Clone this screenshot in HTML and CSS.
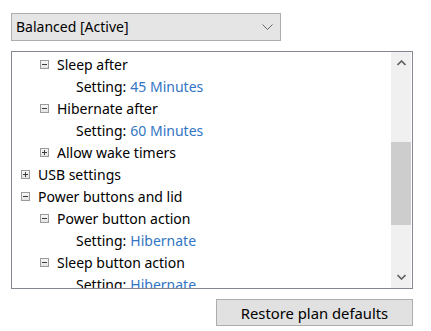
FILE: index.html
```html
<!DOCTYPE html>
<html>
<head>
<meta charset="utf-8">
<link rel="stylesheet" href="styles.css">
</head>
<body>
<div class="page">
  <div class="select">
    <span class="select-text">Balanced [Active]</span>
    <svg class="chev" width="11" height="7" viewBox="0 0 11 7"><path d="M0.5 0.5 L5.5 5.5 L10.5 0.5" fill="none" stroke="#666" stroke-width="1"/></svg>
  </div>
  <div class="listbox">
    <div class="tree">
      <div class="row l1"><span class="box minus"></span><span>Sleep after</span></div>
      <div class="row l2"><span>Setting:</span><span class="val">45 Minutes</span></div>
      <div class="row l1"><span class="box minus"></span><span>Hibernate after</span></div>
      <div class="row l2"><span>Setting:</span><span class="val">60 Minutes</span></div>
      <div class="row l1"><span class="box plus"></span><span>Allow wake timers</span></div>
      <div class="row l0"><span class="box plus"></span><span>USB settings</span></div>
      <div class="row l0"><span class="box minus"></span><span>Power buttons and lid</span></div>
      <div class="row l1"><span class="box minus"></span><span>Power button action</span></div>
      <div class="row l2"><span>Setting:</span><span class="val">Hibernate</span></div>
      <div class="row l1"><span class="box minus"></span><span>Sleep button action</span></div>
      <div class="row l2"><span>Setting:</span><span class="val">Hibernate</span></div>
    </div>
    <div class="scrollbar">
      <div class="arrow">
        <svg width="9" height="6" viewBox="0 0 9 6"><path d="M0.5 5 L4.5 1 L8.5 5" fill="none" stroke="#606060" stroke-width="1.6"/></svg>
      </div>
      <div class="track">
        <div class="thumb"></div>
      </div>
      <div class="arrow">
        <svg width="9" height="6" viewBox="0 0 9 6"><path d="M0.5 1 L4.5 5 L8.5 1" fill="none" stroke="#606060" stroke-width="1.6"/></svg>
      </div>
    </div>
  </div>
  <div class="actions">
    <button class="btn">Restore plan defaults</button>
  </div>
</div>
</body>
</html>
```
FILE: styles.css
```css
html, body {
  margin: 0;
  padding: 0;
  background: #ffffff;
}
body {
  font-family: "Noto Sans", "Open Sans", sans-serif;
  font-size: 14px;
  color: #000;
}
.page {
  padding: 13px 18px 0 11px;
  width: 402px;
}
.select {
  height: 26px;
  border: 1px solid #adadad;
  background: #e5e5e5;
  display: flex;
  align-items: center;
  justify-content: space-between;
  padding: 0 6px 0 4px;
  box-sizing: content-box;
  width: 258px;
}
.select-text {
  line-height: 26px;
}
.chev {
  display: block;
  margin-right: 1px;
}
.listbox {
  margin-top: 10px;
  height: 236px;
  border: 1px solid #828790;
  display: flex;
  overflow: hidden;
}
.tree {
  flex: 1;
  padding-top: 1px;
  overflow: hidden;
}
.row {
  height: 22px;
  display: flex;
  align-items: center;
  white-space: nowrap;
}
.l0 { padding-left: 9px; }
.l1 { padding-left: 28px; }
.l2 { padding-left: 64px; }
.box {
  width: 7px;
  height: 7px;
  border: 1px solid #9a9a9a;
  background: linear-gradient(#f7f7f7, #e4e4e4);
  position: relative;
  margin-right: 8px;
  flex: none;
}
.box::before {
  content: "";
  position: absolute;
  left: 1px;
  top: 3px;
  width: 5px;
  height: 1px;
  background: #3c3c3c;
}
.plus::after {
  content: "";
  position: absolute;
  left: 3px;
  top: 1px;
  width: 1px;
  height: 5px;
  background: #3c3c3c;
}
.val {
  color: #3275c4;
  margin-left: 4px;
}
.scrollbar {
  width: 20px;
  margin-right: 1px;
  background: #f0f0f0;
  display: flex;
  flex-direction: column;
}
.arrow {
  height: 22px;
  display: flex;
  align-items: center;
  justify-content: center;
  flex: none;
}
.track {
  flex: 1;
  padding-top: 68px;
}
.thumb {
  height: 83px;
  background: #cdcdcd;
}
.actions {
  display: flex;
  justify-content: flex-end;
  margin-top: 10px;
}
.btn {
  width: 197px;
  height: 27px;
  border: 1px solid #adadad;
  background: #e1e1e1;
  font-family: "Noto Sans", "Open Sans", sans-serif;
  font-size: 14.8px;
  color: #000;
  padding: 0;
  margin: 0;
}
```
